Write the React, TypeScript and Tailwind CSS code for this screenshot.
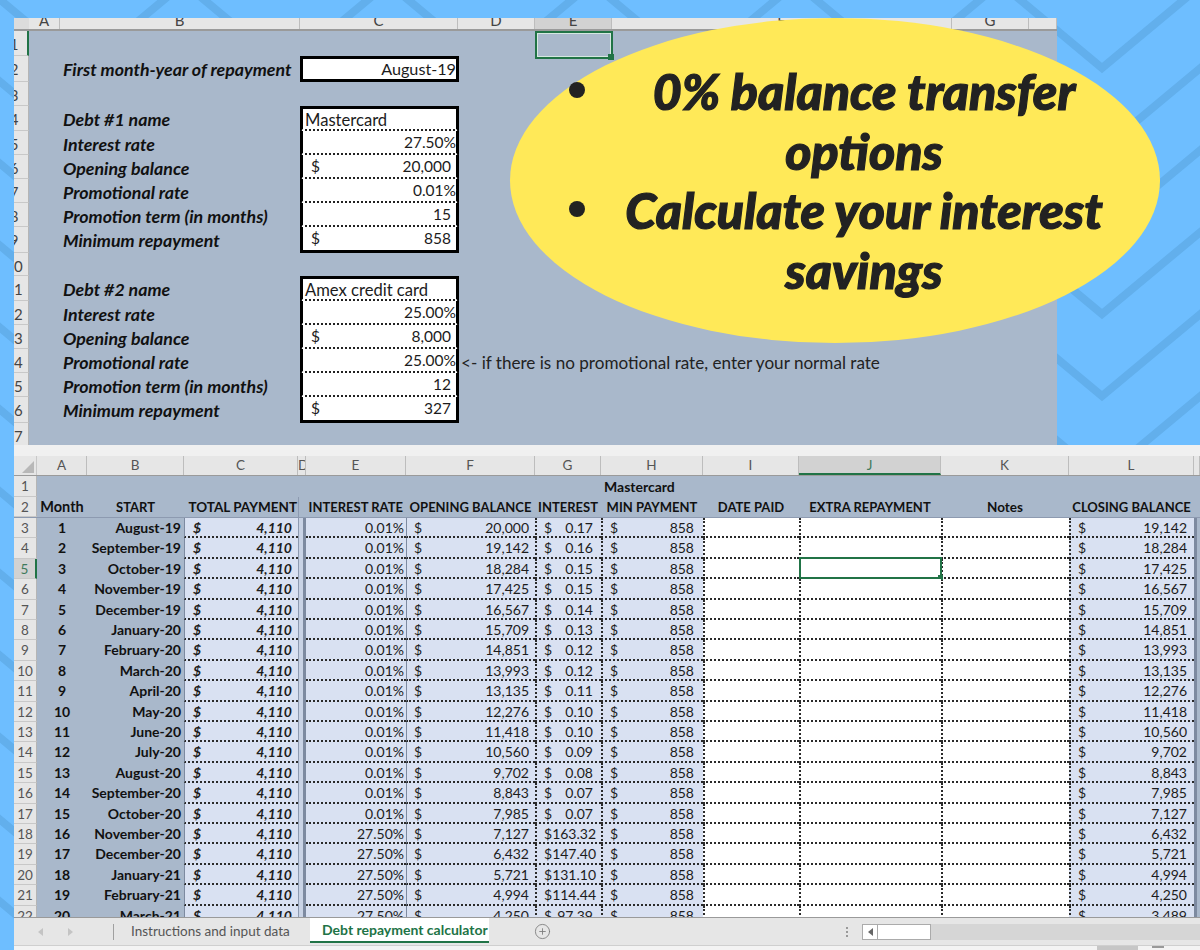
import { CirclePlus } from 'lucide-react';

const GRID =
  'grid grid-cols-[23px_50px_97px_114px_8px_100px_129px_66px_102px_96px_142px_128px_125px_6px]';

const rows = [
  ['1', 'August-19', '0.01%', '20,000', '0.17', '19,142'],
  ['2', 'September-19', '0.01%', '19,142', '0.16', '18,284'],
  ['3', 'October-19', '0.01%', '18,284', '0.15', '17,425'],
  ['4', 'November-19', '0.01%', '17,425', '0.15', '16,567'],
  ['5', 'December-19', '0.01%', '16,567', '0.14', '15,709'],
  ['6', 'January-20', '0.01%', '15,709', '0.13', '14,851'],
  ['7', 'February-20', '0.01%', '14,851', '0.12', '13,993'],
  ['8', 'March-20', '0.01%', '13,993', '0.12', '13,135'],
  ['9', 'April-20', '0.01%', '13,135', '0.11', '12,276'],
  ['10', 'May-20', '0.01%', '12,276', '0.10', '11,418'],
  ['11', 'June-20', '0.01%', '11,418', '0.10', '10,560'],
  ['12', 'July-20', '0.01%', '10,560', '0.09', '9,702'],
  ['13', 'August-20', '0.01%', '9,702', '0.08', '8,843'],
  ['14', 'September-20', '0.01%', '8,843', '0.07', '7,985'],
  ['15', 'October-20', '0.01%', '7,985', '0.07', '7,127'],
  ['16', 'November-20', '27.50%', '7,127', '163.32', '6,432'],
  ['17', 'December-20', '27.50%', '6,432', '147.40', '5,721'],
  ['18', 'January-21', '27.50%', '5,721', '131.10', '4,994'],
  ['19', 'February-21', '27.50%', '4,994', '114.44', '4,250'],
  ['20', 'March-21', '27.50%', '4,250', '97.39', '3,489'],
];

const topCols: [string, string][] = [
  ['A', 'w-[31px]'],
  ['B', 'w-[240px]'],
  ['C', 'w-[158px]'],
  ['D', 'w-[77px]'],
  ['E', 'w-[77px] bg-[#d2d2d2]'],
  ['F', 'w-[340px]'],
  ['G', 'w-[77px]'],
  ['', 'w-[28px]'],
];

const bottomCols = ['A', 'B', 'C', 'D', 'E', 'F', 'G', 'H', 'I', 'J', 'K', 'L', ''];

const Background = () => (
  <svg className="absolute inset-0" width="1200" height="950" fill="none" stroke="#62afec" strokeWidth="8">
    {Array.from({ length: 14 }).map((_, i) => {
      const y = 68 + (i - 1) * 82;
      const pts = [-122, -20, 82, 184, 286, 388, 490, 592, 694, 796, 898, 1000, 1102, 1204]
        .map((x, k) => `${x},${k % 2 === 0 ? y : y - 85}`)
        .join(' ');
      return <polyline key={i} points={pts} />;
    })}
  </svg>
);

// row number that gets cut by the left edge of the screenshot
const TopRowNo = ({ n, active }: { n: string; active?: boolean }) => (
  <div
    className={`w-[15px] shrink-0 overflow-hidden bg-[#e6e6e6] border-b border-[#c8c8c8] text-[15px] text-[#444] ${
      active ? 'border-r-2 border-r-[#217346] bg-[#d2d2d2]' : 'border-r border-r-[#b5b5b5]'
    }`}
  >
    <div className="w-[30px] -ml-[15px] text-center leading-[26px]">{n}</div>
  </div>
);

type TopRowProps = {
  n: string;
  h: string;
  label?: string;
  left?: string;
  right?: string;
  dollar?: boolean;
  pos?: 'single' | 'first' | 'mid' | 'last';
  note?: string;
  selected?: boolean;
};

const boxDots = 'border-b-2 border-b-[#222] [border-bottom-style:dotted]!';

const TopRow = ({ n, h, label, left, right, dollar, pos, note, selected }: TopRowProps) => {
  const box =
    pos === 'single'
      ? 'bg-white border-[3px] border-black'
      : pos === 'first'
        ? `bg-white border-x-[3px] border-t-[3px] border-x-black border-t-black ${boxDots}`
        : pos === 'mid'
          ? `bg-white border-x-[3px] border-x-black ${boxDots}`
          : pos === 'last'
            ? 'bg-white border-x-[3px] border-b-[3px] border-black'
            : '';
  return (
    <div className={`flex ${h}`}>
      <TopRowNo n={n} active={selected} />
      <div className="w-[34px] shrink-0" />
      <div className="w-[237px] shrink-0 font-bold italic text-[17.8px] leading-[27px] text-[#111] whitespace-nowrap">
        {label}
      </div>
      <div className={`w-[159px] shrink-0 flex items-center pt-[1px] text-[16.6px] text-[#1c1c1c] ${box}`}>
        {left && <span className="pl-[2px] pt-[2px]">{left}</span>}
        {dollar && <span className="pl-[8px] text-[15.5px]">$</span>}
        {right && (
          <span
            className={`ml-auto ${right === 'August-19' ? 'text-[16.2px]' : 'text-[15.5px]'} ${
              dollar || right === '15' || right === '12' ? 'pr-[5px]' : ''
            }`}
          >
            {right}
          </span>
        )}
      </div>
      {note && (
        <div className="pl-[2px] text-[17.1px] leading-[27px] text-[#222] whitespace-nowrap">{note}</div>
      )}
      {selected && (
        <div className="relative ml-[76px] w-[78px] h-[28px] border-2 border-[#217346] outline outline-1 -outline-offset-3 outline-[#d5e8e0]">
          <div className="absolute -right-[3px] -bottom-[3px] w-[6px] h-[6px] bg-[#217346]" />
        </div>
      )}
    </div>
  );
};

const TopSheet = () => (
  <div className="w-[1043px] h-[427px] bg-[#a9b8cb] overflow-hidden">
    <div className="flex h-[13px] bg-[#e6e6e6] border-b-2 border-[#9a9a9a]">
      <div className="w-[15px] bg-[#dcdcdc]" />
      {topCols.map(([c, cls], i) => (
        <div
          key={i}
          className={`${cls} shrink-0 overflow-hidden border-r border-[#bdbdbd] text-center text-[15px] leading-[11px] text-[#444]`}
        >
          <div className="-mt-[3px]">{c}</div>
        </div>
      ))}
    </div>
    <TopRow n="1" h="h-[25px]" selected />
    <TopRow n="2" h="h-[26px]" label="First month-year of repayment" right="August-19" pos="single" />
    <TopRow n="3" h="h-[24px]" />
    <TopRow n="4" h="h-[25px]" label="Debt #1 name" left="Mastercard" pos="first" />
    <TopRow n="5" h="h-[24px]" label="Interest rate" right="27.50%" pos="mid" />
    <TopRow n="6" h="h-[24px]" label="Opening balance" dollar right="20,000" pos="mid" />
    <TopRow n="7" h="h-[24px]" label="Promotional rate" right="0.01%" pos="mid" />
    <TopRow n="8" h="h-[24px]" label="Promotion term (in months)" right="15" pos="mid" />
    <TopRow n="9" h="h-[26px]" label="Minimum repayment" dollar right="858" pos="last" />
    <TopRow n="10" h="h-[23px]" />
    <TopRow n="11" h="h-[25px]" label="Debt #2 name" left="Amex credit card" pos="first" />
    <TopRow n="12" h="h-[24px]" label="Interest rate" right="25.00%" pos="mid" />
    <TopRow n="13" h="h-[24px]" label="Opening balance" dollar right="8,000" pos="mid" />
    <TopRow
      n="14"
      h="h-[24px]"
      label="Promotional rate"
      right="25.00%"
      pos="mid"
      note="<- if there is no promotional rate, enter your normal rate"
    />
    <TopRow n="15" h="h-[24px]" label="Promotion term (in months)" right="12" pos="mid" />
    <TopRow n="16" h="h-[26px]" label="Minimum repayment" dollar right="327" pos="last" />
    <TopRow n="17" h="h-[24px]" />
  </div>
);

const RowNo = ({ n, active }: { n: string; active?: boolean }) => (
  <div
    className={`text-center text-[13.5px] leading-[20px] border-b border-[#c8c8c8] ${
      active
        ? 'bg-[#d2d2d2] text-[#3f7a5c] border-r-2 border-r-[#217346]'
        : 'bg-[#e6e6e6] text-[#555] border-r border-r-[#b5b5b5]'
    }`}
  >
    {n}
  </div>
);

const dots = 'border-b-2 border-b-[#2a2a2a] [border-bottom-style:dotted]!';
const vdots = 'border-l-2 border-l-[#2a2a2a] [border-left-style:dotted]!';

const DataRow = ({ row, index }: { row: string[]; index: number }) => {
  const [month, start, rate, opening, interest, closing] = row;
  const bigInterest = interest.length > 5;
  // the sheet's rows are 20.4px, keep them on whole pixels so the dots stay crisp
  const tall = Math.round((index + 1) * 20.4) - Math.round(index * 20.4) === 21;
  return (
    <div className={`${GRID} grid-rows-[100%] ${tall ? 'h-[21px]' : 'h-[20px]'} text-[14px] leading-[20px] text-[#1c1c1c]`}>
      <RowNo n={String(index + 3)} active={index === 2} />
      <div className="text-center font-bold text-[#111]">{month}</div>
      <div className="text-right pr-[3px] font-bold text-[#111] whitespace-nowrap">{start}</div>
      <div className={`flex justify-between bg-[#d9e1f2] border-l border-l-[#7d8aa0] pl-[8px] pr-[6px] font-bold italic ${dots}`}>
        <span>$</span>
        <span>4,110</span>
      </div>
      <div className="bg-[#c9d3e5] border-l border-l-[#8d9ab0] border-r-[3px] border-r-[#7d8aa0]" />
      <div className={`text-right bg-[#d9e1f2] pr-[2px] ${dots}`}>{rate}</div>
      <div className={`flex justify-between bg-[#d9e1f2] border-l border-l-[#7d8aa0] pl-[7px] pr-[6px] ${dots}`}>
        <span>$</span>
        <span>{opening}</span>
      </div>
      <div className={`flex bg-[#d9e1f2] pl-[7px] pr-[8px] ${bigInterest ? '' : 'justify-between'} ${vdots} ${dots}`}>
        <span>$</span>
        <span className={bigInterest ? 'ml-auto' : ''}>{interest}</span>
      </div>
      <div className={`flex justify-between bg-[#d9e1f2] pl-[7px] pr-[9px] ${vdots} ${dots}`}>
        <span>$</span>
        <span>858</span>
      </div>
      <div className={`bg-white ${vdots} ${dots}`} />
      <div className={`relative bg-white ${vdots} ${dots}`}>
        {index === 2 && (
          <div className="absolute -left-[2px] -top-[2px] -right-px -bottom-[2px] border-2 border-[#217346]">
            <div className="absolute -right-[3px] -bottom-[3px] w-[5px] h-[5px] bg-[#217346]" />
          </div>
        )}
      </div>
      <div className={`bg-white ${vdots} ${dots}`} />
      <div className={`flex justify-between bg-[#d9e1f2] pl-[7px] pr-[7px] ${vdots} ${dots}`}>
        <span>$</span>
        <span>{closing}</span>
      </div>
      <div className="border-l-[3px] border-l-[#7d8aa0]" />
    </div>
  );
};

const headerTitles = [
  ['Month', 'text-center text-[14.5px]'],
  ['START', 'text-center'],
  ['TOTAL PAYMENT', 'text-right pr-[1px] text-[13.5px]'],
  ['', ''],
  ['INTEREST RATE', 'text-right pr-[3px]'],
  ['OPENING BALANCE', 'text-center'],
  ['INTEREST', 'text-center'],
  ['MIN PAYMENT', 'text-center'],
  ['DATE PAID', 'text-center'],
  ['EXTRA REPAYMENT', 'text-center'],
  ['Notes', 'text-center text-[13.5px]'],
  ['CLOSING BALANCE', 'text-center'],
  ['', ''],
];

const BottomSheet = () => (
  <div className="w-[1186px] h-[505px] flex flex-col bg-[#a9b8cb]">
    <div className="h-[11px] bg-[#f0f0f0]" />
    <div className={`${GRID} h-[20px] bg-[#e6e6e6] border-b border-[#9a9a9a] text-[13.5px] leading-[19px] text-[#555]`}>
      <div className="flex items-end justify-end pr-[2px] pb-[2px] border-r border-[#c8c8c8]">
        <div className="w-0 h-0 border-l-[12px] border-l-transparent border-b-[12px] border-b-[#b8b8b8]" />
      </div>
      {bottomCols.map((c, i) => (
        <div
          key={i}
          className={`text-center overflow-hidden border-r border-[#bdbdbd] ${
            c === 'J' ? 'bg-[#d2d2d2] border-b-2 border-b-[#217346] text-[#3f7a5c]' : ''
          }`}
        >
          {c}
        </div>
      ))}
    </div>
    <div className="h-[441px] overflow-hidden">
      <div className={`${GRID} h-[21px] text-[14px] leading-[21px]`}>
        <RowNo n="1" />
        <div className="col-start-9 whitespace-nowrap pl-[3px] font-bold text-[#111]">Mastercard</div>
      </div>
      <div className={`${GRID} grid-rows-[100%] h-[21px] text-[13px] leading-[20px] border-b border-[#8d9ab0]`}>
        <RowNo n="2" />
        {headerTitles.map(([t, cls], i) => (
          <div key={i} className={`font-bold text-[#111] whitespace-nowrap ${cls} ${i === 3 ? 'border-l border-l-[#8d9ab0]' : ''}`}>
            {t}
          </div>
        ))}
      </div>
      {rows.map((r, i) => (
        <DataRow key={r[0]} row={r} index={i} />
      ))}
    </div>
    <div className="h-[29px] flex items-center bg-[#e6e6e6] border-t border-[#9a9a9a] border-b border-b-[#cfcfcf] text-[13.5px]">
      <svg width="60" height="10" className="ml-[22px] shrink-0" fill="#c4c4c4">
        <path d="M7 1v8L2 5z" />
        <path d="M32 1v8l5-4z" />
      </svg>
      <div className="ml-[17px] w-px h-[16px] bg-[#a0a0a0]" />
      <div className="ml-[17px] w-[179px] shrink-0 text-[#555] whitespace-nowrap">Instructions and input data</div>
      <div className="self-start h-[25px] w-[179px] shrink-0 bg-white border-b-2 border-[#217346] pl-[12px] font-bold text-[14px] text-[#217346] leading-[24px] whitespace-nowrap">
        Debt repayment calculator
      </div>
      <CirclePlus className="ml-[45px] text-[#7a7a7a]" size={17} strokeWidth={1.2} />
      <div className="ml-[295px] flex flex-col gap-[2px]">
        <div className="w-[2px] h-[2px] bg-[#999]" />
        <div className="w-[2px] h-[2px] bg-[#999]" />
        <div className="w-[2px] h-[2px] bg-[#999]" />
      </div>
      <div className="ml-[14px] flex-1 flex h-[16px] bg-[#d6d6d6]">
        <div className="w-[16px] flex items-center justify-center bg-white border border-[#ababab]">
          <div className="w-0 h-0 border-y-[4px] border-y-transparent border-r-[5px] border-r-[#666]" />
        </div>
        <div className="w-[53px] bg-white border border-[#ababab] border-l-0" />
      </div>
    </div>
    <div className="flex-1 flex bg-[#f3f3f3] overflow-hidden">
      <div className="ml-[1083px] w-[41px] bg-[#c6c6c6]" />
      <div className="ml-[14px] w-[12px] border-t-2 border-[#999]" />
    </div>
  </div>
);

const Callout = () => (
  <div className="absolute left-[510px] top-[18px] w-[650px] h-[325px] rounded-[50%] bg-[#ffe958] pt-[44px] pl-[94px]">
    <ul className="relative w-[520px] text-center font-black italic text-[50px] leading-[59.5px] text-[#222] whitespace-nowrap [-webkit-text-stroke:1.2px_#222]">
      <li className="relative">
        <span className="absolute -left-[35px] top-[20px] w-[16px] h-[16px] rounded-full bg-[#222]" />
        0% balance transfer
        <br />
        options
      </li>
      <li className="relative">
        <span className="absolute -left-[35px] top-[20px] w-[16px] h-[16px] rounded-full bg-[#222]" />
        Calculate your interest
        <br />
        savings
      </li>
    </ul>
  </div>
);

export default function App() {
  return (
    <div className="relative w-[1200px] h-[950px] overflow-hidden bg-[#6ebeff] font-['Lato',sans-serif]">
      <Background />
      <div className="relative pt-[18px] pl-[14px]">
        <TopSheet />
        <BottomSheet />
      </div>
      <Callout />
    </div>
  );
}
